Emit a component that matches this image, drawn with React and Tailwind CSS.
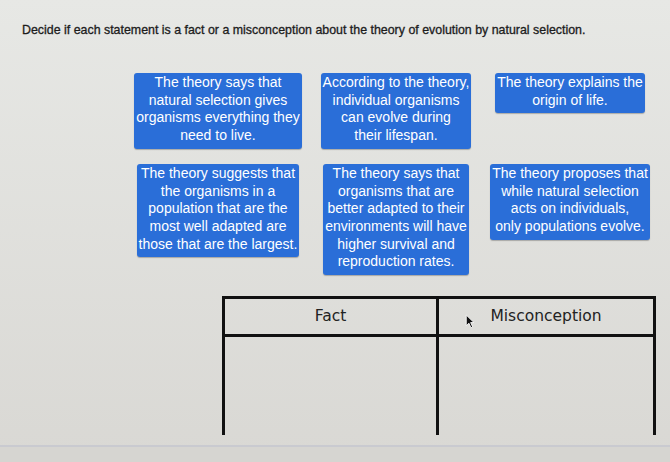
import React from 'react';

const rows = [
  [
    ['The theory says that', 'natural selection gives', 'organisms everything they', 'need to live.'],
    ['According to the theory,', 'individual organisms', 'can evolve during', 'their lifespan.'],
    ['The theory explains the', 'origin of life.'],
  ],
  [
    ['The theory suggests that', 'the organisms in a', 'population that are the', 'most well adapted are', 'those that are the largest.'],
    ['The theory says that', 'organisms that are', 'better adapted to their', 'environments will have', 'higher survival and', 'reproduction rates.'],
    ['The theory proposes that', 'while natural selection', 'acts on individuals,', 'only populations evolve.'],
  ],
];

// draggable statement tile
const Tile = ({ lines }) => (
  <div className="rounded-[3px] bg-[#2a6ed8] px-[2px] pt-[1px] pb-[4px] text-center text-[14px] leading-[17.7px] text-white shadow-[0_1px_1px_rgba(0,0,0,0.25)]">
    {lines.map((line, i) => (
      <div key={i} className="whitespace-nowrap">{line}</div>
    ))}
  </div>
);

const Cursor = () => (
  <svg width="10" height="15" viewBox="0 0 9 14" className="absolute left-[465px] top-[314px]">
    <path d="M1 1 L1 11 L3.5 8.6 L5.4 12.8 L7 12.1 L5.1 8 L8.2 8 Z" fill="#111" stroke="#fff" strokeWidth="0.8" />
  </svg>
);

const App = () => {
  return (
    <div className="relative h-[462px] w-[670px] overflow-hidden bg-gradient-to-b from-[#e7e8e5] to-[#d9d8d4] font-['Liberation_Sans',Arial,sans-serif]">
      <div className="h-[445px]">
        <p className="pl-[22px] pt-[21px] text-[12.4px] leading-[18px] text-[#1c1c1c] [-webkit-text-stroke:0.3px_#1c1c1c]">
          Decide if each statement is a fact or a misconception about the theory of evolution by natural selection.
        </p>

        <div className="ml-[132px] mt-[34px] grid grid-cols-[172px_160px_164px] items-start gap-x-[12px] gap-y-[15px]">
          {rows.flat().map((lines, i) => (
            <div key={i} className="flex justify-center">
              <Tile lines={lines} />
            </div>
          ))}
        </div>

        <div className="ml-[222px] mt-[21px] w-[434px] font-['DejaVu_Sans',Verdana,sans-serif] text-[15.5px] text-[#222]">
          <div className="grid grid-cols-2 border-x-[3px] border-t-[3px] border-[#111]">
            <div className="flex h-[38px] items-center justify-center border-r-[3px] border-b-[3px] border-[#111]">Fact</div>
            <div className="flex h-[38px] items-center justify-center border-b-[3px] border-[#111]">Misconception</div>
            <div className="h-[98px] border-r-[3px] border-[#111]" />
            <div className="h-[98px]" />
          </div>
        </div>
      </div>

      <div className="h-[17px] border-t-[2px] border-[#c9cad0] bg-[#d6d5d1]" />

      <Cursor />
    </div>
  );
};

export default App;
